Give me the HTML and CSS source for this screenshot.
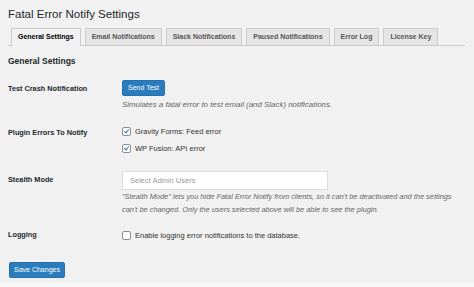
FILE: index.html
```html
<!DOCTYPE html>
<html lang="en">
<head>
  <meta charset="UTF-8">
  <title>Fatal Error Notify Settings</title>
  <link rel="stylesheet" href="styles.css">
</head>
<body>
  <div class="wrap">
    <h1>Fatal Error Notify Settings</h1>

    <!-- tabs -->
    <nav class="tabs">
      <a class="tab active">General Settings</a>
      <a class="tab">Email Notifications</a>
      <a class="tab">Slack Notifications</a>
      <a class="tab">Paused Notifications</a>
      <a class="tab">Error Log</a>
      <a class="tab">License Key</a>
    </nav>

    <h2>General Settings</h2>

    <div class="row row-test">
      <div class="label">Test Crash Notification</div>
      <div class="field">
        <button class="btn">Send Test</button>
        <p class="desc">Simulates a fatal error to test email (and Slack) notifications.</p>
      </div>
    </div>

    <div class="row row-plugins">
      <div class="label">Plugin Errors To Notify</div>
      <div class="field">
        <label class="check"><span class="box checked"></span>Gravity Forms: Feed error</label>
        <label class="check"><span class="box checked"></span>WP Fusion: API error</label>
      </div>
    </div>

    <div class="row row-stealth">
      <div class="label">Stealth Mode</div>
      <div class="field">
        <div class="select">Select Admin Users</div>
        <p class="desc">"Stealth Mode" lets you hide Fatal Error Notify from clients, so it can't be deactivated and the settings can't be changed. Only the users selected above will be able to see the plugin.</p>
      </div>
    </div>

    <div class="row row-logging">
      <div class="label">Logging</div>
      <div class="field">
        <label class="check"><span class="box"></span>Enable logging error notifications to the database.</label>
      </div>
    </div>

    <button class="btn btn-save">Save Changes</button>
  </div>
  <div class="footer-strip"></div>
</body>
</html>
```

FILE: styles.css
```css
* {
  box-sizing: border-box;
}
body {
  margin: 0;
  background: #f1f1f1;
  font-family: "Liberation Sans", Arial, sans-serif;
  color: #23282d;
  font-size: 7.5px;
  height: 287px;
  overflow: hidden;
  position: relative;
}
.wrap {
  padding: 0 0 0 8px;
}
h1 {
  margin: 0;
  padding-top: 6px;
  font-size: 11.5px;
  font-weight: 400;
  line-height: 17px;
  color: #23282d;
}
/* tab strip */
.tabs {
  display: flex;
  margin-top: 5px;
  margin-right: 9px;
  padding-left: 3px;
  border-bottom: 1px solid #ccc;
  height: 18px;
}
.tab {
  display: block;
  flex: none;
  white-space: nowrap;
  height: 17px;
  line-height: 16px;
  padding: 0 6px;
  margin-right: 4px;
  border: 1px solid #ccc;
  border-bottom: none;
  background: #e5e5e5;
  color: #555;
  font-weight: 700;
  font-size: 7px;
}
.tab.active {
  background: #f1f1f1;
  color: #000;
  height: 18px;
  margin-bottom: -1px;
}
h2 {
  margin: 0;
  padding-top: 9px;
  font-size: 8.5px;
  line-height: 12px;
  font-weight: 700;
  color: #23282d;
}
/* settings rows */
.row {
  display: flex;
}
.label {
  width: 114px;
  flex: none;
  font-weight: 700;
  font-size: 7.3px;
  color: #23282d;
}
.field {
  flex: 1;
}
.row-test {
  margin-top: 13px;
}
.row-test .label {
  padding-top: 4px;
}
.btn {
  display: block;
  height: 16px;
  padding: 0 5px;
  border: 1px solid #2371ad;
  border-radius: 2px;
  background: #2a7cbd;
  color: #fff;
  font-family: inherit;
  font-size: 7px;
  line-height: 14px;
}
.desc {
  margin: 2px 0 0;
  font-style: italic;
  color: #666;
  font-size: 7.9px;
  line-height: 13px;
}
.row-plugins {
  margin-top: 15px;
}
.row-plugins .label {
  padding-top: 2px;
}
.check {
  display: flex;
  align-items: center;
  height: 10px;
  margin-bottom: 7px;
  color: #333;
  font-size: 7.5px;
}
.box {
  width: 9px;
  height: 9px;
  margin-right: 4px;
  border: 1px solid #8c8f94;
  border-radius: 2px;
  background: #fff;
  position: relative;
}
.box.checked::after {
  content: "";
  position: absolute;
  left: 2px;
  top: 0;
  width: 2px;
  height: 4px;
  border: solid #2a7cbd;
  border-width: 0 1.5px 1.5px 0;
  transform: rotate(40deg);
}
.row-stealth {
  margin-top: 11px;
}
.row-stealth .label {
  padding-top: 4px;
}
.select {
  width: 206px;
  height: 19px;
  background: #fff;
  border: 1px solid #ddd;
  padding-left: 7px;
  line-height: 17px;
  color: #999;
  font-size: 7.5px;
}
.row-stealth .desc {
  margin-top: 0;
  max-width: 342px;
  font-size: 7.4px;
}
.row-logging {
  margin-top: 14px;
}
.row-logging .check {
  margin: 0;
}
.btn-save {
  margin-top: 22px;
  margin-left: 1px;
  height: 16px;
  padding: 0 4px;
}
.footer-strip {
  position: absolute;
  left: 0;
  right: 0;
  bottom: 0;
  height: 4px;
  background: #f7f7f7;
}
```
